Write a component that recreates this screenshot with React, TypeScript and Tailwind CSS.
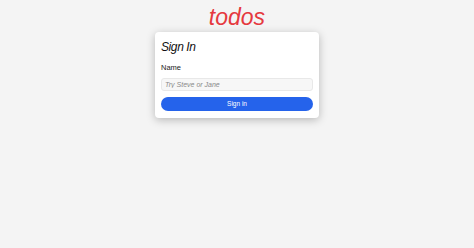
import React from "react";

export default function App() {
  return (
    <div className="flex h-[248px] w-[474px] flex-col items-center bg-[#f4f4f4] font-['Liberation_Sans',Arial,sans-serif]">
      <h1 className="mt-[4px] text-[23px] leading-[26px] italic text-[#e5393f]">todos</h1>
      <div className="mt-[2px] w-[164px] rounded-[4px] bg-white px-[6px] pt-[9px] pb-[7px] shadow-[0_2px_8px_rgba(0,0,0,0.25)]">
        <h2 className="text-[12px] leading-[13px] tracking-[-0.4px] italic text-[#111]">Sign In</h2>
        <label className="mt-[9px] block text-[7.5px] leading-[9px] text-[#222]">Name</label>
        <input
          className="mt-[6px] block h-[13px] w-full rounded-[3px] border border-[#e8e8e8] bg-[#f7f7f7] px-[3px] text-[7px] italic outline-none placeholder:text-[#8a8a8a]"
          placeholder="Try Steve or Jane"
        />
        <button className="mt-[6px] block h-[14px] w-full rounded-full bg-[#2563eb] text-[6.5px] leading-[14px] text-white">
          Sign in
        </button>
      </div>
    </div>
  );
}
